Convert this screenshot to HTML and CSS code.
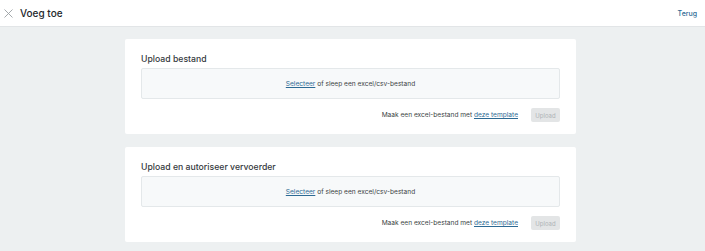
FILE: index.html
```html
<!DOCTYPE html>
<html>
<head>
<meta charset="utf-8">
<link rel="stylesheet" href="styles.css">
</head>
<body>
<header class="topbar">
  <div class="title-wrap">
    <svg class="close" width="9" height="9" viewBox="0 0 9 9"><path d="M0.5 0.5L8.5 8.5M8.5 0.5L0.5 8.5" stroke="#9a9fa3" stroke-width="0.9"/></svg>
    <span class="title">Voeg toe</span>
  </div>
  <a class="back">Terug</a>
</header>
<main class="content">
  <section class="card">
    <h2 class="card-title">Upload bestand</h2>
    <div class="drop"><a class="link">Selecteer</a>&nbsp;of sleep een excel/csv-bestand</div>
    <div class="actions">
      <span class="hint">Maak een excel-bestand met <a class="link">deze template</a></span>
      <button class="btn">Upload</button>
    </div>
  </section>
  <section class="card">
    <h2 class="card-title">Upload en autoriseer vervoerder</h2>
    <div class="drop"><a class="link">Selecteer</a>&nbsp;of sleep een excel/csv-bestand</div>
    <div class="actions">
      <span class="hint">Maak een excel-bestand met <a class="link">deze template</a></span>
      <button class="btn">Upload</button>
    </div>
  </section>
</main>
</body>
</html>
```
FILE: styles.css
```css
* { box-sizing: border-box; }
html, body { margin: 0; padding: 0; }
body {
  font-family: Inter, "Noto Sans", sans-serif;
  background: #edf0f1;
  color: #2b2f33;
  width: 705px;
  height: 251px;
  overflow: hidden;
}
.topbar {
  height: 27px;
  background: #fff;
  border-bottom: 1px solid #e2e5e7;
  display: flex;
  align-items: center;
  justify-content: space-between;
  padding: 0 8px 0 4px;
}
.title-wrap { display: flex; align-items: center; gap: 7px; }
.close { display: block; }
.title { font-size: 10px; font-weight: 500; color: #23272b; }
.back { font-size: 7px; color: #2d6a94; font-weight: 500; }
.content {
  display: flex;
  flex-direction: column;
  align-items: center;
  gap: 13px;
  padding: 12px 4px 0 0;
}
.card {
  width: 451px;
  background: #fff;
  border-radius: 2px;
  padding: 14px 16px 12px;
}
.card-title {
  margin: 0 0 3px;
  font-size: 8.7px;
  line-height: 12px;
  font-weight: 500;
  color: #35393d;
}
.drop {
  height: 31px;
  background: #f7f9fa;
  border: 1px solid #e4e8ea;
  border-radius: 2px;
  display: flex;
  align-items: center;
  justify-content: center;
  font-size: 6.6px;
  color: #3a3f44;
}
.link { color: #2d6a94; text-decoration: underline; }
.actions {
  display: flex;
  justify-content: flex-end;
  align-items: center;
  gap: 13px;
  margin-top: 9px;
}
.hint { font-size: 6.6px; color: #3a3f44; }
.btn {
  font-family: inherit;
  font-size: 6px;
  width: 29px;
  height: 14px;
  border: 0;
  border-radius: 2px;
  background: #e3e5e6;
  color: #aeb3b6;
  padding: 0;
}
```
